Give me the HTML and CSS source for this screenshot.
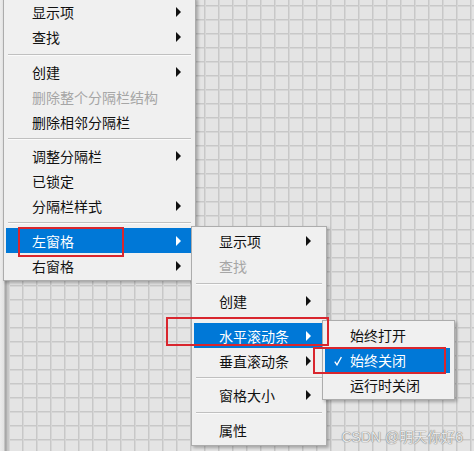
FILE: index.html
```html
<!DOCTYPE html>
<html lang="zh-CN">
<head>
  <meta charset="UTF-8">
  <title>分隔栏菜单</title>
  <link rel="stylesheet" href="styles.css">
</head>
<body>

  <div class="splitter"></div>
  <div class="canvas"></div>

  <!-- splitter context menu -->
  <div class="menu menu-main">
    <div class="item">显示项<span class="arrow"></span></div>
    <div class="item">查找<span class="arrow"></span></div>
    <div class="sep"></div>
    <div class="item">创建<span class="arrow"></span></div>
    <div class="item disabled">删除整个分隔栏结构</div>
    <div class="item">删除相邻分隔栏</div>
    <div class="sep"></div>
    <div class="item">调整分隔栏<span class="arrow"></span></div>
    <div class="item">已锁定</div>
    <div class="item">分隔栏样式<span class="arrow"></span></div>
    <div class="sep"></div>
    <div class="item active">左窗格<span class="arrow"></span></div>
    <div class="item">右窗格<span class="arrow"></span></div>
  </div>

  <div class="menu menu-pane">
    <div class="item">显示项<span class="arrow"></span></div>
    <div class="item disabled">查找</div>
    <div class="sep"></div>
    <div class="item">创建<span class="arrow"></span></div>
    <div class="sep"></div>
    <div class="item active">水平滚动条<span class="arrow"></span></div>
    <div class="item">垂直滚动条<span class="arrow"></span></div>
    <div class="sep"></div>
    <div class="item">窗格大小<span class="arrow"></span></div>
    <div class="sep"></div>
    <div class="item">属性</div>
  </div>

  <div class="menu menu-scroll">
    <div class="item"><span class="tick"></span>始终打开</div>
    <div class="item active">
      <span class="tick">
        <svg width="8" height="10" viewBox="0 0 8 10"><path d="M0.8 5.6 L3 8.8 L7.4 1" fill="none" stroke="#fff" stroke-width="1.4"/></svg>
      </span>始终关闭
    </div>
    <div class="item"><span class="tick"></span>运行时关闭</div>
  </div>

  <!-- red annotation boxes -->
  <div class="mark mark-left"></div>
  <div class="mark mark-hscroll"></div>
  <div class="mark mark-closed"></div>

  <div class="watermark">CSDN @明天你好6</div>

</body>
</html>
```

FILE: styles.css
```css
body {
  margin: 0;
  height: 100vh;
  display: flex;
  overflow: hidden;
  font-family: "Noto Sans CJK SC", "Liberation Sans", sans-serif;
  font-size: 14px;
  color: #111;
  background: #e4e4e4;
}

.splitter {
  width: 8px;
  background: linear-gradient(to right, #ececec 0, #e2e2e2 4px, #a4a4a4 5px, #b4b4b4 7px, #d4d4d4 8px);
}

.canvas {
  flex: 1;
  background-color: #e4e4e4;
  background-image:
    linear-gradient(to right, #c8c8c8 0, #c8c8c8 1px, #d6d6d6 1px, #d6d6d6 2px, transparent 2px),
    linear-gradient(to bottom, #c8c8c8 0, #c8c8c8 1px, #d6d6d6 1px, #d6d6d6 2px, transparent 2px);
  background-size: 14px 14px;
  background-position: 0 5px;
}

.menu {
  position: absolute;
  box-sizing: border-box;
  background: #f0f0f0;
  border: 1px solid #acacac;
  padding: 2px 4px 2px 2px;
  box-shadow: 2px 2px 3px rgba(0, 0, 0, 0.28);
}

.menu-main {
  left: 3px;
  top: -3px;
  width: 193px;
}

.menu-pane {
  left: 191px;
  top: 226px;
  width: 136px;
}

.menu-scroll {
  left: 322px;
  top: 320px;
  width: 133px;
}

.item {
  height: 24.8px;
  display: flex;
  align-items: center;
  justify-content: space-between;
  padding: 0 11px 0 26px;
  white-space: nowrap;
}

.menu-main .item {
  padding-right: 10px;
}

.menu-pane .item {
  padding-left: 25px;
}

.menu-scroll .item {
  justify-content: flex-start;
  padding-left: 9px;
}

.item.disabled {
  color: #a6a6a6;
}

.item.active {
  background: #0078d7;
  color: #fff;
}

.arrow {
  width: 0;
  height: 0;
  border-top: 5px solid transparent;
  border-bottom: 5px solid transparent;
  border-left: 5px solid #111;
}

.item.active .arrow {
  border-left-color: #fff;
}

.tick {
  width: 16px;
  display: flex;
  align-items: center;
  padding-top: 1px;
}

.sep {
  margin: 4px 0 4px 2px;
  border-top: 1px solid #c0c0c0;
  border-bottom: 1px solid #fbfbfb;
}

.mark {
  position: absolute;
  box-sizing: border-box;
  border: 2px solid #d9262e;
}

.mark-left {
  left: 18px;
  top: 227px;
  width: 106px;
  height: 30px;
}

.mark-hscroll {
  left: 166px;
  top: 317px;
  width: 163px;
  height: 29px;
}

.mark-closed {
  left: 313px;
  top: 347px;
  width: 133px;
  height: 27px;
}

.watermark {
  position: absolute;
  right: 11px;
  top: 426px;
  font-family: "Liberation Sans", "Noto Sans CJK SC", sans-serif;
  font-size: 14px;
  color: #e8e8e8;
  text-shadow: 0 0 1px #6e6e6e, 0 0 1px #8a8a8a;
}
```
